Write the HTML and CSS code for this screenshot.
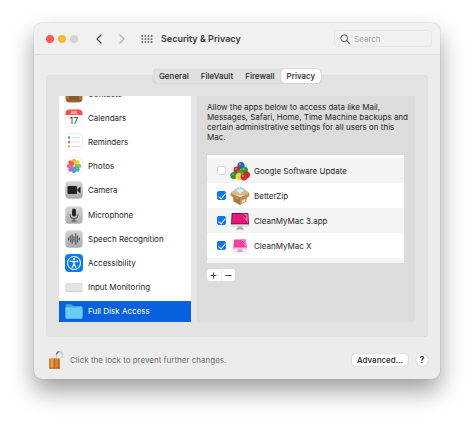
FILE: index.html
```html
<!DOCTYPE html>
<html lang="en">
<head>
    <meta charset="UTF-8">
    <meta name="viewport" content="width=device-width, initial-scale=1.0">
    <title>Security &amp; Privacy</title>
    <link rel="stylesheet" href="styles.css">
</head>
<body>
    <div class="window">
        <header class="titlebar">
            <div class="lights">
                <span class="light red"></span>
                <span class="light yellow"></span>
                <span class="light gray"></span>
            </div>
            <div class="nav">
                <button type="button" aria-label="Back">
                    <svg width="8" height="12" viewBox="0 0 8 12"><path d="M6 2 2 6l4 4" fill="none" stroke="#4a4a4a" stroke-width="1.2" stroke-linecap="round" stroke-linejoin="round"/></svg>
                </button>
                <button type="button" aria-label="Forward">
                    <svg width="8" height="12" viewBox="0 0 8 12"><path d="M2 2l4 4-4 4" fill="none" stroke="#b4b4b4" stroke-width="1.2" stroke-linecap="round" stroke-linejoin="round"/></svg>
                </button>
            </div>
            <button type="button" class="grid-button" aria-label="Show all">
                <svg width="12" height="10" viewBox="0 0 12 10"><path d="M.5 2h11M.5 5h11M.5 8h11" stroke="#4f4f4f" stroke-width="1.600" stroke-dasharray="1.600 1.500"/></svg>
            </button>
            <h1>Security &amp; Privacy</h1>
            <label class="search">
                <svg width="10" height="10" viewBox="0 0 10 10"><circle cx="4.200" cy="4.200" r="3.400" fill="none" stroke="#555" stroke-width="1"/><path d="M6.700 6.700 9.300 9.300" stroke="#555" stroke-width="1.200" stroke-linecap="round"/></svg>
                <input type="text" placeholder="Search" aria-label="Search">
            </label>
        </header>

        <main>
            <nav class="tabs">
                <button type="button">General</button>
                <button type="button">FileVault</button>
                <button type="button">Firewall</button>
                <button type="button" class="active">Privacy</button>
            </nav>

            <div class="panel">
                <div class="sidebar">
                    <ul class="categories">
                        <li>
                            <svg class="icon" viewBox="0 0 18 18"><rect x=".5" y=".5" width="17" height="17" rx="4" fill="#a97238"/><rect x="4" y="3" width="10" height="12" fill="#8a5a2a"/><path d="M2 15.500h14" stroke="#7c6040" stroke-width="1.500"/></svg>
                            <span>Contacts</span>
                        </li>
                        <li>
                            <svg class="icon" viewBox="0 0 18 18"><rect x=".5" y=".5" width="17" height="17" rx="4" fill="#fff" stroke="#e2e2e2" stroke-width=".5"/><path d="M.5 6V4.500a4 4 0 0 1 4-4h9a4 4 0 0 1 4 4V6z" fill="#f4504b"/><text x="9" y="5" class="cal-month">JUL</text><text x="9" y="14.500" class="cal-day">17</text></svg>
                            <span>Calendars</span>
                        </li>
                        <li>
                            <svg class="icon" viewBox="0 0 18 18"><rect x=".5" y=".5" width="17" height="17" rx="4" fill="#fff" stroke="#dcdcdc" stroke-width=".5"/><circle cx="4" cy="4.500" r="1.200" fill="#3f98c4"/><circle cx="4" cy="9" r="1.200" fill="#e8594a"/><circle cx="4" cy="13.500" r="1.200" fill="#f0a04b"/><path d="M7 4.500h8.500M7 9h8.500M7 13.500h8.500" stroke="#dadada" stroke-width=".8"/></svg>
                            <span>Reminders</span>
                        </li>
                        <li>
                            <svg class="icon" viewBox="0 0 18 18">
                                <rect x=".5" y=".5" width="17" height="17" rx="4" fill="#fff" stroke="#e0e0e0" stroke-width=".5"/>
                                <g opacity=".9">
                                    <rect x="7" y="1.700" width="4" height="6.500" rx="2" fill="#f9a01b"/>
                                    <rect x="7" y="1.700" width="4" height="6.500" rx="2" fill="#d8d127" transform="rotate(45 9 9)"/>
                                    <rect x="7" y="1.700" width="4" height="6.500" rx="2" fill="#7fc241" transform="rotate(90 9 9)"/>
                                    <rect x="7" y="1.700" width="4" height="6.500" rx="2" fill="#3dafa0" transform="rotate(135 9 9)"/>
                                    <rect x="7" y="1.700" width="4" height="6.500" rx="2" fill="#4a8fdc" transform="rotate(180 9 9)"/>
                                    <rect x="7" y="1.700" width="4" height="6.500" rx="2" fill="#9268bd" transform="rotate(225 9 9)"/>
                                    <rect x="7" y="1.700" width="4" height="6.500" rx="2" fill="#d85a91" transform="rotate(270 9 9)"/>
                                    <rect x="7" y="1.700" width="4" height="6.500" rx="2" fill="#ef4f3c" transform="rotate(315 9 9)"/>
                                </g>
                            </svg>
                            <span>Photos</span>
                        </li>
                        <li>
                            <svg class="icon" viewBox="0 0 18 18"><use href="#tile"/><rect x="2.500" y="5" width="9.500" height="8" rx="1.200" fill="#202326"/><path d="m12.500 8 3-2.500v7l-3-2.500z" fill="#202326"/></svg>
                            <span>Camera</span>
                        </li>
                        <li>
                            <svg class="icon" viewBox="0 0 18 18"><use href="#tile"/><rect x="7" y="2.500" width="4" height="8" rx="2" fill="#25282a"/><path d="M5 8v.8a4 4 0 0 0 8 0V8M9 13v2.200M6.500 15.200h5" fill="none" stroke="#3a3c3e" stroke-width=".9"/></svg>
                            <span>Microphone</span>
                        </li>
                        <li>
                            <svg class="icon" viewBox="0 0 18 18"><use href="#tile"/><path d="M3.500 8v2M5.300 6v6M7.100 4.500v9M9 6.500v5M10.800 3.500v11M12.600 6v6M14.400 8v2" stroke="#46484a" stroke-width="1" stroke-linecap="round"/></svg>
                            <span>Speech Recognition</span>
                        </li>
                        <li>
                            <svg class="icon" viewBox="0 0 18 18"><rect width="18" height="18" rx="4" fill="#0a7cf0"/><circle cx="9" cy="9" r="6.500" fill="none" stroke="#fff" stroke-width="1.100"/><circle cx="9" cy="5.200" r="1.100" fill="#fff"/><path d="M5.200 7.200 9 7.800l3.800-.6M9 7.800v2.400M7.200 13.500 9 9.700l1.800 3.800" fill="none" stroke="#fff" stroke-width="1.200" stroke-linecap="round"/></svg>
                            <span>Accessibility</span>
                        </li>
                        <li>
                            <svg class="icon" viewBox="0 0 18 18"><rect x=".5" y="5" width="17" height="9" rx="1" fill="#dedcdc"/><path d="M1.500 7h15M1.500 9h15M1.500 11h15" stroke="#f0eeee" stroke-width="1.200" stroke-dasharray="1.200 .4"/><path d="M.5 13.700h17" stroke="#c9c9c9" stroke-width=".6"/></svg>
                            <span>Input Monitoring</span>
                        </li>
                        <li class="selected">
                            <svg class="icon" viewBox="0 0 18 18"><path d="M.5 14.500V3.500a1.200 1.200 0 0 1 1.200-1.200h4.500l1.800 1.700h8.300a1.200 1.200 0 0 1 1.200 1.200v9.300z" fill="#3fa9e2"/><rect x=".5" y="5.200" width="17" height="11.500" rx="1.200" fill="#69cbf6"/></svg>
                            <span>Full Disk Access</span>
                        </li>
                    </ul>
                </div>

                <section class="access">
                    <p>Allow the apps below to access data like Mail, Messages, Safari, Home, Time Machine backups and certain administrative settings for all users on this Mac.</p>
                    <div class="apps">
                        <label class="app">
                            <input type="checkbox">
                            <svg class="app-icon" viewBox="0 0 20 20"><circle cx="11" cy="4.500" r="3.600" fill="#2d62ad"/><circle cx="7" cy="9" r="3.500" fill="#c72b2f"/><circle cx="14.500" cy="9.300" r="3.500" fill="#329a37"/><circle cx="3.800" cy="14.500" r="3.500" fill="#2f8b35"/><circle cx="16.500" cy="14" r="3.400" fill="#c52b2a"/><circle cx="10" cy="11.500" r="2.800" fill="#46a037"/><circle cx="9" cy="15.500" r="3.500" fill="#f0d431"/><circle cx="14" cy="16" r="3.400" fill="#d72b2d"/><g fill="#fff" opacity=".45"><circle cx="10" cy="3.200" r="1"/><circle cx="6" cy="7.800" r=".9"/><circle cx="13.500" cy="8" r=".9"/><circle cx="3" cy="13.500" r=".8"/><circle cx="8" cy="14.300" r=".9"/><circle cx="13" cy="15" r=".9"/></g></svg>
                            <span>Google Software Update</span>
                        </label>
                        <label class="app">
                            <input type="checkbox" checked>
                            <svg class="app-icon" viewBox="0 0 20 20"><path d="M4.500 7a5.500 5 0 0 1 11 0" fill="#e3f1f6" stroke="#9dc4d0" stroke-width="1.800" stroke-dasharray="2 .6"/><path d="m1 6 4-2 5 3.500L15 4l4 2.500-3 3H4z" fill="#dcb77f"/><path d="m3 8.500 7 2.500v8l-6.500-3.500z" fill="#a8763c"/><path d="m10 11 7-2.500-.7 7L10 19z" fill="#c79556"/><path d="m1 6 3 3.500 6 2-2.500 2.800L.5 9.500zM19 6.500l-3 3-6 2 3 2.500 6.500-4z" fill="#b98a55"/><path d="m12 14 3-1v2.500l-3 1.500z" fill="#eee1c8"/></svg>
                            <span>BetterZip</span>
                        </label>
                        <label class="app">
                            <input type="checkbox" checked>
                            <svg class="app-icon" viewBox="0 0 20 20"><path d="M8 15h4l.7 3H7.300z" fill="#aeb0b2"/><path d="M6 18h8" stroke="#969696" stroke-width=".8"/><path d="M1.500 2h17l1 13.500H.5z" fill="#d6d8da"/><path d="M1.800 2h16.400l.8 11.200H1z" fill="#4d1730"/><path d="M2.500 2.700h15l.7 9.800H1.800z" fill="#e3187a"/><path d="M11 2.700h6.500l.7 9.800z" fill="#f25ba4"/><path d="m12 3 4 3.500" stroke="#a51258" stroke-width="1.200"/></svg>
                            <span>CleanMyMac 3.app</span>
                        </label>
                        <label class="app">
                            <input type="checkbox" checked>
                            <svg class="app-icon" viewBox="0 0 20 20"><rect x="2.500" y="8" width="15" height="9.500" rx="3.500" fill="#f5ecf7"/><path d="M8 13h4l.8 3H7.200z" fill="#c7a7c9"/><path d="M4.200 3.500h11.600l1 9H3.200z" fill="#f0429c"/><path d="M10 3.500h5.800l1 9z" fill="#f777bb"/><path d="M3.300 11.500h13.400l.2 2H3.100z" fill="#f2c6de"/><path d="m11.500 4.500 3 3" stroke="#d12680" stroke-width=".9"/></svg>
                            <span>CleanMyMac X</span>
                        </label>
                        <div class="app"></div>
                    </div>
                    <div class="add-remove">
                        <button type="button" aria-label="Add"><svg width="7" height="7" viewBox="0 0 7 7"><path d="M3.500.5v6M.5 3.500h6" stroke="#444" stroke-width="1"/></svg></button>
                        <button type="button" aria-label="Remove"><svg width="7" height="7" viewBox="0 0 7 7"><path d="M.5 3.500h6" stroke="#444" stroke-width="1"/></svg></button>
                    </div>
                </section>
            </div>
        </main>

        <footer>
            <button type="button" class="lock" aria-label="Lock">
                <svg width="16" height="20" viewBox="0 0 16 20"><path d="M8.500 9V4.500a3 3 0 0 1 5.600-1.200V8" fill="none" stroke="#c9cccc" stroke-width="1.500"/><path d="M8.500 4.500C8.700 2.800 10 1.600 11.500 1.600" fill="none" stroke="#77797a" stroke-width="1.400"/><rect x="1" y="8.500" width="11" height="10" rx="1" fill="#d9822b"/><path d="M4 8.500v10" stroke="#eba65c" stroke-width="1.500"/><path d="M6.500 8.500v10M10.500 8.500v10" stroke="#b9661c" stroke-width="1"/><path d="M1 18.200h11" stroke="#9b5818" stroke-width=".8"/></svg>
            </button>
            <span class="lock-text">Click the lock to prevent further changes.</span>
            <button type="button" class="advanced">Advanced...</button>
            <button type="button" class="help">?</button>
        </footer>
    </div>

    <svg width="0" height="0" class="defs">
        <defs>
            <linearGradient id="tile-fill" x1="0" y1="0" x2="0" y2="1">
                <stop offset="0" stop-color="#d3d6d7"/>
                <stop offset="1" stop-color="#a9abab"/>
            </linearGradient>
            <rect id="tile" x=".3" y=".3" width="17.400" height="17.400" rx="4" fill="url(#tile-fill)"/>
        </defs>
    </svg>
</body>
</html>
```

FILE: styles.css
```css
* {
    box-sizing: border-box;
    margin: 0;
    padding: 0;
}

body {
    padding: 23px 34px 45px;
    background: #fff;
    font-family: Inter, "Liberation Sans", sans-serif;
    font-size: 8px;
    color: #262626;
}

button, input {
    font: inherit;
    color: inherit;
}

button {
    border: none;
    background: none;
}

svg {
    display: block;
    flex: none;
}

.defs {
    position: absolute;
}

.window {
    background: #ececec;
    border-radius: 8px;
    box-shadow: 0 0 1px rgba(0, 0, 0, 0.4), 0 12px 24px rgba(0, 0, 0, 0.38);
}

/* title bar */
.titlebar {
    display: flex;
    align-items: center;
    height: 32px;
    padding: 0 8px 0 12px;
    background: #f0f0f0;
    border-bottom: 1px solid #dedede;
    border-radius: 8px 8px 0 0;
}

.lights {
    display: flex;
    gap: 4px;
}

.light {
    width: 8px;
    height: 8px;
    border-radius: 50%;
}

.red {
    background: #fb5b53;
}

.yellow {
    background: #f9b932;
}

.gray {
    background: #d3d4cf;
}

.nav {
    display: flex;
    gap: 15px;
    margin-left: 17px;
}

.grid-button {
    margin-left: 15px;
}

h1 {
    margin-left: 8px;
    font-size: 9px;
    font-weight: 600;
    color: #3a3a3a;
}

.search {
    display: flex;
    align-items: center;
    gap: 4px;
    width: 98px;
    height: 17px;
    margin-left: auto;
    padding: 0 5px;
    border: 1px solid #e6e6e6;
    border-radius: 4px;
}

.search input {
    width: 100%;
    min-width: 0;
    border: none;
    outline: none;
    background: none;
}

.search input::placeholder {
    color: #a6a6a6;
}

/* tabs */
main {
    padding: 14px 12px 0;
}

.tabs {
    position: relative;
    display: flex;
    width: max-content;
    height: 14px;
    margin: 0 auto -8px;
    background: #e0e0e0;
    border-radius: 4px;
    box-shadow: 0 0 1px rgba(0, 0, 0, 0.3);
}

.tabs button {
    padding: 0 6px;
    border-radius: 4px;
    font-weight: 500;
}

.tabs .active {
    background: #fff;
    box-shadow: 0 0 1px rgba(0, 0, 0, 0.4);
}

.panel {
    display: flex;
    gap: 6px;
    padding: 20px 12px 14px;
    background: #e3e3e3;
    border: 1px solid #e0e0e0;
    border-radius: 3px;
}

.sidebar {
    display: flex;
    flex: 0 0 132px;
    align-items: flex-end;
    height: 226px;
    overflow: hidden;
    background: #fff;
}

.categories {
    display: flex;
    flex-direction: column;
    justify-content: space-between;
    width: 100%;
    height: 239px;
    list-style: none;
}

.categories li {
    display: flex;
    align-items: center;
    gap: 5px;
    height: 21px;
    padding-left: 6px;
}

.categories .selected {
    background: #0562dc;
    color: #fff;
}

.icon {
    width: 18px;
    height: 18px;
}

.cal-month {
    font-size: 4px;
    font-weight: 600;
    fill: #fff;
    text-anchor: middle;
}

.cal-day {
    font-size: 9px;
    fill: #333;
    text-anchor: middle;
}

/* apps with access */
.access {
    flex: 1;
    min-width: 0;
    padding: 6px 4px 0 10px;
    background: #dcdcdc;
}

.access p {
    line-height: 10px;
}

.apps {
    height: 108px;
    margin: 13px 7px 0 0;
    padding-top: 3px;
    overflow: hidden;
    background: #fff;
}

.app {
    display: flex;
    align-items: center;
    height: 25px;
    padding-left: 10px;
}

.app:nth-child(odd) {
    background: #f4f4f4;
}

.app input {
    display: flex;
    align-items: center;
    justify-content: center;
    width: 9px;
    height: 9px;
    margin-right: 4px;
    appearance: none;
    background: #fff;
    border: 1px solid #dcdcdc;
    border-radius: 2px;
}

.app input:checked {
    background: #0f76ee;
    border-color: #0f76ee;
}

.app input:checked::after {
    content: "";
    width: 3px;
    height: 6px;
    border: solid #fff;
    border-width: 0 1px 1px 0;
    transform: rotate(40deg);
}

.app-icon {
    width: 20px;
    height: 20px;
    margin-right: 4px;
}

.add-remove {
    display: flex;
    width: 28px;
    height: 12px;
    margin-top: 6px;
    background: #fff;
    border-radius: 3px;
}

.add-remove button {
    display: flex;
    flex: 1;
    align-items: center;
    justify-content: center;
}

.add-remove button + button {
    border-left: 1px solid #ececec;
}

/* footer */
footer {
    display: flex;
    align-items: center;
    height: 42px;
    padding: 3px 12px 0 14px;
}

.lock-text {
    margin-left: 6px;
    color: #707070;
}

.advanced {
    height: 12px;
    margin-left: auto;
    padding: 0 5px;
    background: #fff;
    border-radius: 3px;
    box-shadow: 0 0 1px rgba(0, 0, 0, 0.4);
    font-weight: 500;
}

.help {
    width: 12px;
    height: 12px;
    margin-left: 8px;
    background: #fff;
    border-radius: 50%;
    box-shadow: 0 0 1px rgba(0, 0, 0, 0.4);
    font-size: 9px;
    font-weight: 600;
}
```
